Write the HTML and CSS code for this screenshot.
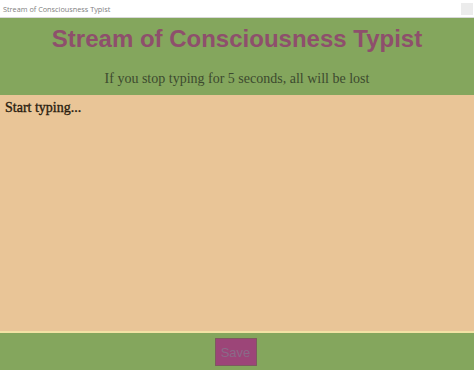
FILE: index.html
```html
<!DOCTYPE html>
<html>
<head>
<meta charset="utf-8">
<link rel="stylesheet" href="styles.css">
</head>
<body>
<div class="app">
  <div class="titlebar">
    <span class="titlebar-text">Stream of Consciousness Typist</span>
    <span class="titlebar-btn"></span>
  </div>
  <header class="header">
    <h1 class="title">Stream of Consciousness Typist</h1>
    <p class="subtitle">If you stop typing for 5 seconds, all will be lost</p>
  </header>
  <main class="editor">
    <textarea class="editor-input" placeholder="Start typing..."></textarea>
  </main>
  <footer class="footer">
    <button class="save-btn">Save</button>
  </footer>
</div>
</body>
</html>
```
FILE: styles.css
```css
html, body {
  margin: 0;
  padding: 0;
  height: 100%;
}
.app {
  display: flex;
  flex-direction: column;
  height: 370px;
  width: 474px;
  overflow: hidden;
}
.titlebar {
  height: 17px;
  background: #ffffff;
  border-bottom: 1px solid #d8d8d8;
  display: flex;
  align-items: center;
  justify-content: space-between;
  padding: 0 1px 0 3px;
  box-sizing: content-box;
}
.titlebar-text {
  font-family: "Open Sans", "Noto Sans", sans-serif;
  font-size: 7.3px;
  color: #808080;
}
.titlebar-btn {
  width: 12px;
  height: 12px;
  background: #ececec;
  margin-top: 1px;
}
.header {
  background: #84a65d;
  height: 77px;
  display: flex;
  flex-direction: column;
  align-items: center;
  box-sizing: border-box;
  padding-top: 7px;
}
.title {
  margin: 0;
  font-family: "Liberation Sans", Arial, sans-serif;
  font-weight: bold;
  font-size: 24px;
  color: #8e4f6c;
  line-height: 28px;
}
.subtitle {
  margin: 17px 0 0 0;
  font-family: "Liberation Serif", Georgia, serif;
  font-size: 14px;
  color: #3d4a2f;
  line-height: 18px;
}
.editor {
  flex: 1;
  background: #e9c597;
  display: flex;
}
.editor-input {
  flex: 1;
  border: none;
  background: transparent;
  resize: none;
  outline: none;
  padding: 4px 5px;
  margin: 0;
  font-family: "Liberation Serif", Georgia, serif;
  font-size: 14px;
  line-height: 18px;
  -webkit-text-stroke: 0.35px #2a1d10;
}
.editor-input::placeholder {
  color: #2a1d10;
  opacity: 1;
}
.footer {
  height: 39px;
  background: #84a65d;
  border-top: 2px solid #f2e2a4;
  display: flex;
  justify-content: center;
  align-items: flex-start;
  padding-top: 5px;
  box-sizing: border-box;
}
.save-btn {
  width: 42px;
  height: 28px;
  margin-right: 3px;
  background: #9c4578;
  border: 1px solid #7d5a5e;
  color: #8a6a88;
  font-family: "Liberation Sans", Arial, sans-serif;
  font-size: 13px;
  padding: 0;
}
```
